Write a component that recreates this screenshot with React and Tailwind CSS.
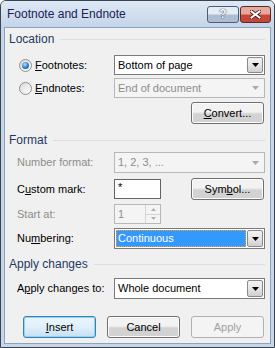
import React from "react";

const font = { fontFamily: '"Liberation Sans", Arial, sans-serif' };

function U({ children }) {
  return <span className="underline underline-offset-[1px]">{children}</span>;
}

function Arrow({ disabled }) {
  return (
    <svg width="7" height="4" viewBox="0 0 7 4">
      <path d="M0 0H7L3.5 4Z" fill={disabled ? "#a9a9a9" : "#000"} />
    </svg>
  );
}

function Combo({ value, disabled, selected, h = "h-[21px]" }) {
  return (
    <div
      className={
        "flex w-[151px] items-stretch border " +
        h +
        (disabled ? " border-[#b5b8bb] bg-[#f4f4f4]" : " border-[#7a7a7a] bg-white")
      }
    >
      <div className="flex flex-1 items-center p-[1px]">
        <div
          className={
            "flex h-full w-full items-center pl-[2px] " +
            (selected
              ? "bg-[#3399ff] text-white outline outline-1 outline-dotted outline-[#f0a030] -outline-offset-1"
              : disabled
              ? "text-[#8d8d8d]"
              : "text-black")
          }
        >
          {value}
        </div>
      </div>
      {disabled ? (
        <div className="flex w-[17px] items-center justify-center">
          <Arrow disabled />
        </div>
      ) : (
        <div className="m-[1px] ml-0 flex w-[16px] items-center justify-center rounded-[2px] border border-[#8a8a8a] bg-gradient-to-b from-[#f2f2f2] via-[#e6e6e6] to-[#cfcfcf]">
          <Arrow />
        </div>
      )}
    </div>
  );
}

function Button({ children, def, disabled, className = "" }) {
  return (
    <div
      className={
        "flex h-[22px] w-[73px] items-center justify-center rounded-[3px] border " +
        (disabled
          ? "border-[#adb2b5] bg-[#f4f4f4] text-[#a0a0a0] "
          : def
          ? "border-[#3c7fb1] bg-gradient-to-b from-[#eaf6fd] via-[#e0eff9] to-[#c5e0f2] text-black shadow-[inset_0_0_0_1px_#8fd4f5] "
          : "border-[#707070] bg-gradient-to-b from-[#f2f2f2] from-45% to-[#d2d2d2] to-55% text-black shadow-[inset_0_0_0_1px_#fcfcfc] ") +
        className
      }
    >
      {children}
    </div>
  );
}

function Radio({ checked }) {
  return (
    <div className="flex h-[13px] w-[13px] items-center justify-center rounded-full border border-[#8e8f8f] bg-gradient-to-br from-[#dcdcdc] to-[#fbfbfb]">
      {checked && (
        <div className="h-[7px] w-[7px] rounded-full bg-[radial-gradient(circle_at_40%_35%,#a6e5ff,#2a6fbf_60%,#1a4f8f)]" />
      )}
    </div>
  );
}

function Heading({ children, className = "" }) {
  return (
    <div className={"flex h-[14px] items-center gap-[6px] pr-[5px] text-[#1e3a5f] " + className}>
      <span className="text-[12px]">{children}</span>
      <div className="h-px flex-1 bg-[#d5dfe5]" />
    </div>
  );
}

function Row({ label, disabled, children, className = "", radio }) {
  return (
    <div className={"flex items-center " + className}>
      {radio !== undefined ? (
        <div className="flex w-[105px] items-center pl-[10px]">
          <Radio checked={radio} />
          <span className="ml-[3px] text-black">{label}</span>
        </div>
      ) : (
        <div className={"w-[105px] pl-[8px] " + (disabled ? "text-[#8d8d8d]" : "text-black")}>
          {label}
        </div>
      )}
      {children}
    </div>
  );
}

export default function App() {
  return (
    <div
      className="flex h-[348px] w-[275px] flex-col overflow-hidden rounded-t-[6px] border border-[#3a4350] bg-[#c6d5e8] text-[11px] leading-[15px]"
      style={font}
    >
      {/* Title bar */}
      <div className="flex h-[26px] shrink-0 items-center bg-gradient-to-b from-[#dfe9f5] to-[#c4d4e8] pl-[6px] pr-[3px]">
        <span className="flex-1 text-[12px] text-[#1b2256]">Footnote and Endnote</span>
        <div className="flex h-[17px] w-[32px] items-center justify-center rounded-[3px] border border-[#4f5d72] bg-gradient-to-b from-[#e4ecf6] from-45% to-[#aebdd2] to-55% text-[12px] font-bold text-[#ffffff] [text-shadow:0_0_1px_#233,0_0_1px_#233]">
          ?
        </div>
        <div className="ml-[1px] flex h-[17px] w-[31px] items-center justify-center rounded-[3px] border border-[#5d2a26] bg-gradient-to-b from-[#e8a89b] from-45% to-[#c6463a] to-55%">
          <svg width="11" height="9" viewBox="0 0 11 9">
            <path d="M1.5 1.5L9.5 7.5M9.5 1.5L1.5 7.5" stroke="#3a1a18" strokeWidth="3.6" strokeLinecap="square" />
            <path d="M1.5 1.5L9.5 7.5M9.5 1.5L1.5 7.5" stroke="#fff" strokeWidth="2" strokeLinecap="square" />
          </svg>
        </div>
      </div>

      {/* Client area */}
      <div className="mx-[3px] mb-[3px] flex flex-1 flex-col border border-[#8da2bc] bg-[#f0f0f0] pl-[4px]">
        <Heading className="mt-[4px]">Location</Heading>
        <Row className="mt-[9px]" radio={true} label={<><U>F</U>ootnotes:</>}>
          <Combo value="Bottom of page" h="h-[20px]" />
        </Row>
        <Row className="mt-[3px]" radio={false} label={<><U>E</U>ndnotes:</>}>
          <Combo value="End of document" disabled h="h-[20px]" />
        </Row>
        <div className="mt-[4px] flex justify-end pr-[6px]">
          <Button>
            <U>C</U>onvert...
          </Button>
        </div>

        <Heading className="mt-[9px]">Format</Heading>
        <Row className="mt-[5px]" disabled label="Number format:">
          <Combo value="1, 2, 3, ..." disabled />
        </Row>
        <Row className="mt-[5px]" label={<>C<U>u</U>stom mark:</>}>
          <div className="h-[20px] w-[47px] border border-[#646464] bg-white pl-[3px] leading-[14px]">*</div>
          <div className="flex-1" />
          <Button className="mr-[6px]">
            Sym<U>b</U>ol...
          </Button>
        </Row>
        <Row className="mt-[4px]" disabled label="Start at:">
          <div className="flex h-[20px] w-[47px] border border-[#b5b8bb] bg-[#f4f4f4]">
            <div className="flex flex-1 items-center pl-[3px] text-[#8d8d8d]">1</div>
            <div className="flex w-[15px] flex-col border-l border-[#d4d4d4]">
              <div className="flex flex-1 items-center justify-center border-b border-[#d4d4d4]">
                <svg width="5" height="3" viewBox="0 0 5 3"><path d="M0 3H5L2.5 0Z" fill="#b0b0b0" /></svg>
              </div>
              <div className="flex flex-1 items-center justify-center">
                <svg width="5" height="3" viewBox="0 0 5 3"><path d="M0 0H5L2.5 3Z" fill="#b0b0b0" /></svg>
              </div>
            </div>
          </div>
        </Row>
        <Row className="mt-[4px]" label={<>Nu<U>m</U>bering:</>}>
          <Combo value="Continuous" selected />
        </Row>

        <Heading className="mt-[8px]">Apply changes</Heading>
        <Row className="mt-[7px]" label={<>A<U>p</U>ply changes to:</>}>
          <Combo value="Whole document" />
        </Row>

        <div className="mt-[17px] flex justify-end gap-[11px] pr-[6px]">
          <Button def>
            <U>I</U>nsert
          </Button>
          <Button>Cancel</Button>
          <Button disabled>Apply</Button>
        </div>
      </div>
    </div>
  );
}
